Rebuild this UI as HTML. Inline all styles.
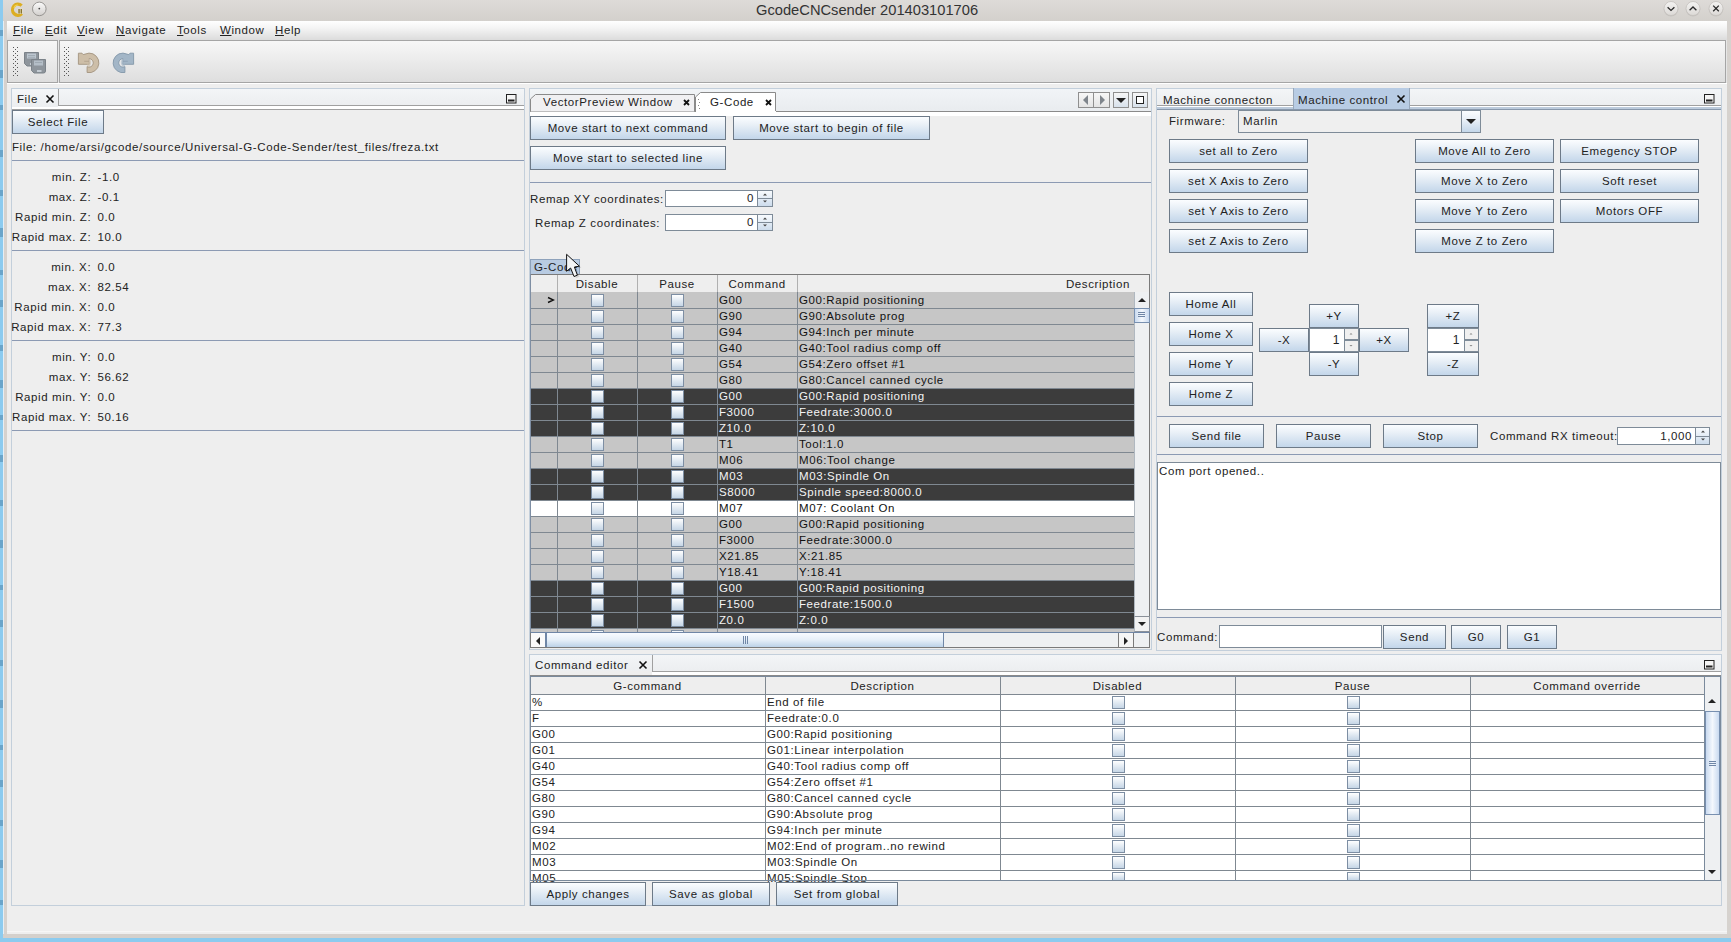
<!DOCTYPE html><html><head><meta charset="utf-8"><title>GcodeCNCsender</title><style>
*{margin:0;padding:0;box-sizing:border-box}
html,body{width:1731px;height:942px;overflow:hidden;background:#8ccbef;font-family:"Liberation Sans",sans-serif;font-size:11.5px;color:#222}
body div{position:absolute}
.t{white-space:pre;color:#222;letter-spacing:0.6px}
.b{border:1px solid #6d7a88;background:linear-gradient(#fbfdff 0%,#e9f0f7 35%,#c3d6ea 100%);text-align:center;white-space:pre;color:#222;letter-spacing:0.6px;box-sizing:content-box}
.cb{width:11px;height:11px;border:1px solid #7d8ea3;background:linear-gradient(#ffffff,#dce6f0 60%,#c6d6e6);box-sizing:content-box}
</style></head><body>
<div style="left:3px;top:0px;width:1728px;height:942px;background:#d6d2ce"></div>
<div style="left:3px;top:21px;width:1px;height:913px;background:#e6eef4"></div>
<div style="left:0px;top:30px;width:3px;height:6px;background:#4f86ab;opacity:0.55"></div>
<div style="left:0px;top:70px;width:3px;height:8px;background:#4f86ab;opacity:0.55"></div>
<div style="left:0px;top:105px;width:3px;height:5px;background:#4f86ab;opacity:0.55"></div>
<div style="left:0px;top:150px;width:3px;height:7px;background:#4f86ab;opacity:0.55"></div>
<div style="left:0px;top:190px;width:3px;height:6px;background:#4f86ab;opacity:0.55"></div>
<div style="left:0px;top:228px;width:3px;height:9px;background:#4f86ab;opacity:0.55"></div>
<div style="left:0px;top:270px;width:3px;height:5px;background:#4f86ab;opacity:0.55"></div>
<div style="left:0px;top:300px;width:3px;height:7px;background:#4f86ab;opacity:0.55"></div>
<div style="left:0px;top:345px;width:3px;height:6px;background:#4f86ab;opacity:0.55"></div>
<div style="left:0px;top:380px;width:3px;height:8px;background:#4f86ab;opacity:0.55"></div>
<div style="left:0px;top:415px;width:3px;height:5px;background:#4f86ab;opacity:0.55"></div>
<div style="left:0px;top:455px;width:3px;height:7px;background:#4f86ab;opacity:0.55"></div>
<div style="left:0px;top:500px;width:3px;height:6px;background:#4f86ab;opacity:0.55"></div>
<div style="left:0px;top:540px;width:3px;height:8px;background:#4f86ab;opacity:0.55"></div>
<div style="left:0px;top:585px;width:3px;height:5px;background:#4f86ab;opacity:0.55"></div>
<div style="left:0px;top:620px;width:3px;height:7px;background:#4f86ab;opacity:0.55"></div>
<div style="left:0px;top:660px;width:3px;height:6px;background:#4f86ab;opacity:0.55"></div>
<div style="left:0px;top:700px;width:3px;height:8px;background:#4f86ab;opacity:0.55"></div>
<div style="left:0px;top:745px;width:3px;height:5px;background:#4f86ab;opacity:0.55"></div>
<div style="left:0px;top:780px;width:3px;height:7px;background:#4f86ab;opacity:0.55"></div>
<div style="left:0px;top:820px;width:3px;height:6px;background:#4f86ab;opacity:0.55"></div>
<div style="left:0px;top:860px;width:3px;height:8px;background:#4f86ab;opacity:0.55"></div>
<div style="left:0px;top:900px;width:3px;height:5px;background:#4f86ab;opacity:0.55"></div>
<div style="left:3px;top:0px;width:1728px;height:21px;background:linear-gradient(#dedbd8,#d3d0cc)"></div>
<div class="t" style="left:756px;top:1px;height:18px;line-height:18px;font-size:14.7px;color:#333;letter-spacing:0">GcodeCNCsender 201403101706</div>
<svg style="position:absolute;left:9px;top:2px" width="16" height="16" viewBox="0 0 16 16"><path d="M12.6 3.6 A5.4 5.6 0 1 0 12.8 11.6" fill="none" stroke="#dcae22" stroke-width="3.2"/><path d="M5 6 A4 4 0 0 1 9 3" fill="none" stroke="#f2d24a" stroke-width="1.2"/><rect x="8.8" y="6.6" width="4.6" height="5.4" fill="#f1e7c6"/><rect x="9.4" y="7" width="1.3" height="4.6" fill="#7d6a22"/><rect x="11.6" y="7" width="1.3" height="4.6" fill="#7d6a22"/></svg>
<svg style="position:absolute;left:31px;top:1px" width="17" height="17" viewBox="0 0 17 17"><defs><linearGradient id="gb" x1="0" y1="0" x2="0" y2="1"><stop offset="0" stop-color="#fbfbfb"/><stop offset="1" stop-color="#d2cfcc"/></linearGradient></defs><circle cx="8.3" cy="7.9" r="6.8" fill="url(#gb)" stroke="#8f8c89" stroke-width="0.9"/><circle cx="8.3" cy="7.6" r="0.9" fill="#444"/></svg>
<svg style="position:absolute;left:1661.5px;top:0px" width="18" height="19" viewBox="0 0 18 19"><defs><linearGradient id="wgv" x1="0" y1="0" x2="0" y2="1"><stop offset="0" stop-color="#f4f3f2"/><stop offset="1" stop-color="#dcd9d6"/></linearGradient></defs><circle cx="9" cy="9.3" r="7.2" fill="#bdb9b5" opacity="0.6"/><circle cx="9" cy="8.5" r="7" fill="url(#wgv)" stroke="#c4c0bc" stroke-width="0.8"/><path d="M5.6 7.2 L9 10.4 L12.4 7.2" fill="none" stroke="#2a2a2a" stroke-width="1.3"/></svg>
<svg style="position:absolute;left:1684.4px;top:0px" width="18" height="19" viewBox="0 0 18 19"><defs><linearGradient id="wg^" x1="0" y1="0" x2="0" y2="1"><stop offset="0" stop-color="#f4f3f2"/><stop offset="1" stop-color="#dcd9d6"/></linearGradient></defs><circle cx="9" cy="9.3" r="7.2" fill="#bdb9b5" opacity="0.6"/><circle cx="9" cy="8.5" r="7" fill="url(#wg^)" stroke="#c4c0bc" stroke-width="0.8"/><path d="M5.6 10.2 L9 7 L12.4 10.2" fill="none" stroke="#2a2a2a" stroke-width="1.3"/></svg>
<svg style="position:absolute;left:1707.3px;top:0px" width="18" height="19" viewBox="0 0 18 19"><defs><linearGradient id="wgx" x1="0" y1="0" x2="0" y2="1"><stop offset="0" stop-color="#f4f3f2"/><stop offset="1" stop-color="#dcd9d6"/></linearGradient></defs><circle cx="9" cy="9.3" r="7.2" fill="#bdb9b5" opacity="0.6"/><circle cx="9" cy="8.5" r="7" fill="url(#wgx)" stroke="#c4c0bc" stroke-width="0.8"/><path d="M6.2 5.6 L11.8 11.2 M11.8 5.6 L6.2 11.2" fill="none" stroke="#2a2a2a" stroke-width="1.3"/></svg>
<div style="left:7px;top:21px;width:1720px;height:19px;background:linear-gradient(#ffffff,#f3f3f3 40%,#dcdcdc)"></div>
<div class="t" style="left:13px;top:22px;height:16px;line-height:16px;font-size:11.5px"><u>F</u>ile</div>
<div class="t" style="left:45px;top:22px;height:16px;line-height:16px;font-size:11.5px"><u>E</u>dit</div>
<div class="t" style="left:77px;top:22px;height:16px;line-height:16px;font-size:11.5px"><u>V</u>iew</div>
<div class="t" style="left:116px;top:22px;height:16px;line-height:16px;font-size:11.5px"><u>N</u>avigate</div>
<div class="t" style="left:177px;top:22px;height:16px;line-height:16px;font-size:11.5px"><u>T</u>ools</div>
<div class="t" style="left:220px;top:22px;height:16px;line-height:16px;font-size:11.5px"><u>W</u>indow</div>
<div class="t" style="left:275px;top:22px;height:16px;line-height:16px;font-size:11.5px"><u>H</u>elp</div>
<div style="left:7px;top:40px;width:1720px;height:44px;background:#e6e6e6"></div>
<div style="left:7px;top:40px;width:51px;height:43px;border:1px solid #a5a5a5;background:linear-gradient(#f7f7f7,#dedede)"></div>
<div style="left:59px;top:40px;width:1667px;height:43px;border:1px solid #a5a5a5;background:linear-gradient(#f7f7f7,#dedede)"></div>
<div style="left:13px;top:47px;width:1px;height:1px;background:#555"></div>
<div style="left:17px;top:47px;width:1px;height:1px;background:#555"></div>
<div style="left:15px;top:49px;width:1px;height:1px;background:#555"></div>
<div style="left:13px;top:51px;width:1px;height:1px;background:#555"></div>
<div style="left:17px;top:51px;width:1px;height:1px;background:#555"></div>
<div style="left:15px;top:53px;width:1px;height:1px;background:#555"></div>
<div style="left:13px;top:55px;width:1px;height:1px;background:#555"></div>
<div style="left:17px;top:55px;width:1px;height:1px;background:#555"></div>
<div style="left:15px;top:57px;width:1px;height:1px;background:#555"></div>
<div style="left:13px;top:59px;width:1px;height:1px;background:#555"></div>
<div style="left:17px;top:59px;width:1px;height:1px;background:#555"></div>
<div style="left:15px;top:61px;width:1px;height:1px;background:#555"></div>
<div style="left:13px;top:63px;width:1px;height:1px;background:#555"></div>
<div style="left:17px;top:63px;width:1px;height:1px;background:#555"></div>
<div style="left:15px;top:65px;width:1px;height:1px;background:#555"></div>
<div style="left:13px;top:67px;width:1px;height:1px;background:#555"></div>
<div style="left:17px;top:67px;width:1px;height:1px;background:#555"></div>
<div style="left:15px;top:69px;width:1px;height:1px;background:#555"></div>
<div style="left:13px;top:71px;width:1px;height:1px;background:#555"></div>
<div style="left:17px;top:71px;width:1px;height:1px;background:#555"></div>
<div style="left:15px;top:73px;width:1px;height:1px;background:#555"></div>
<div style="left:13px;top:75px;width:1px;height:1px;background:#555"></div>
<div style="left:17px;top:75px;width:1px;height:1px;background:#555"></div>
<div style="left:64px;top:47px;width:1px;height:1px;background:#555"></div>
<div style="left:68px;top:47px;width:1px;height:1px;background:#555"></div>
<div style="left:66px;top:49px;width:1px;height:1px;background:#555"></div>
<div style="left:64px;top:51px;width:1px;height:1px;background:#555"></div>
<div style="left:68px;top:51px;width:1px;height:1px;background:#555"></div>
<div style="left:66px;top:53px;width:1px;height:1px;background:#555"></div>
<div style="left:64px;top:55px;width:1px;height:1px;background:#555"></div>
<div style="left:68px;top:55px;width:1px;height:1px;background:#555"></div>
<div style="left:66px;top:57px;width:1px;height:1px;background:#555"></div>
<div style="left:64px;top:59px;width:1px;height:1px;background:#555"></div>
<div style="left:68px;top:59px;width:1px;height:1px;background:#555"></div>
<div style="left:66px;top:61px;width:1px;height:1px;background:#555"></div>
<div style="left:64px;top:63px;width:1px;height:1px;background:#555"></div>
<div style="left:68px;top:63px;width:1px;height:1px;background:#555"></div>
<div style="left:66px;top:65px;width:1px;height:1px;background:#555"></div>
<div style="left:64px;top:67px;width:1px;height:1px;background:#555"></div>
<div style="left:68px;top:67px;width:1px;height:1px;background:#555"></div>
<div style="left:66px;top:69px;width:1px;height:1px;background:#555"></div>
<div style="left:64px;top:71px;width:1px;height:1px;background:#555"></div>
<div style="left:68px;top:71px;width:1px;height:1px;background:#555"></div>
<div style="left:66px;top:73px;width:1px;height:1px;background:#555"></div>
<div style="left:64px;top:75px;width:1px;height:1px;background:#555"></div>
<div style="left:68px;top:75px;width:1px;height:1px;background:#555"></div>
<svg style="position:absolute;left:23px;top:51px" width="24" height="23" viewBox="0 0 24 23"><path d="M1.5 1.5 H15.5 V13 Q15.5 15 13.5 15 H4 L1.5 12.5 Z" fill="#8e959c" stroke="#7b8289"/><rect x="4" y="2.5" width="9" height="5" fill="#bcc6cf"/><rect x="5" y="4" width="7" height="0.8" fill="#9aa4ad"/><rect x="5" y="5.8" width="7" height="0.8" fill="#9aa4ad"/><rect x="7" y="12" width="4.5" height="2" fill="#c3cbd2"/><path d="M8.5 8.5 H22.5 V20 Q22.5 22 20.5 22 H11 L8.5 19.5 Z" fill="#8e959c" stroke="#7b8289"/><rect x="11" y="9.5" width="9" height="5" fill="#b4bec7"/><rect x="12" y="11" width="7" height="0.8" fill="#9aa4ad"/><rect x="14" y="19" width="4.5" height="2" fill="#c3cbd2"/></svg>
<svg style="position:absolute;left:76px;top:50px" width="25" height="25" viewBox="0 0 25 25"><g><path d="M2.4 3.2 L6 3.2 L7.2 4.6 L13 3.1 A9.8 9.8 0 1 1 11.1 22.5 L11.1 16.6 A4.2 4.2 0 1 0 13 8.7 L13.2 14.3 L2.4 14.3 Z" fill="#cdbea8" stroke="#a39480" stroke-width="0.9" stroke-linejoin="round"/><path d="M13 8.7 A4.2 4.2 0 0 1 11.1 16.6 L11.1 13.5 L8 13.5 L8 9 Z" fill="#cdbea8" opacity="0.6"/><path d="M8.2 11.3 H13" stroke="#a39480" stroke-width="0.8" opacity="0.7"/></g></svg>
<svg style="position:absolute;left:111px;top:50px" width="25" height="25" viewBox="0 0 25 25"><g transform="translate(25,0) scale(-1,1)"><path d="M2.4 3.2 L6 3.2 L7.2 4.6 L13 3.1 A9.8 9.8 0 1 1 11.1 22.5 L11.1 16.6 A4.2 4.2 0 1 0 13 8.7 L13.2 14.3 L2.4 14.3 Z" fill="#a3b6c7" stroke="#8397a9" stroke-width="0.9" stroke-linejoin="round"/><path d="M13 8.7 A4.2 4.2 0 0 1 11.1 16.6 L11.1 13.5 L8 13.5 L8 9 Z" fill="#a3b6c7" opacity="0.6"/><path d="M8.2 11.3 H13" stroke="#8397a9" stroke-width="0.8" opacity="0.7"/></g></svg>
<div style="left:7px;top:84px;width:1720px;height:850px;background:#eeeeee"></div>
<div style="left:7px;top:83px;width:1720px;height:1px;background:#ffffff"></div>
<div style="left:11px;top:88px;width:514px;height:818px;border:1px solid #c3cfdb;background:#eeeeee"></div>
<div style="left:12px;top:89px;width:512px;height:16px;background:linear-gradient(#f3f5f7,#eceef0)"></div>
<div style="left:58px;top:105px;width:466px;height:1px;background:#a0a0a0"></div>
<div style="left:58px;top:106px;width:466px;height:1px;background:#ffffff"></div>
<div style="left:12px;top:106px;width:512px;height:3px;background:#ffffff"></div>
<div style="left:12px;top:109px;width:512px;height:1px;background:#a0a0a0"></div>
<div style="left:58px;top:89px;width:1px;height:17px;background:#a0a0a0"></div>
<div style="left:12px;top:89px;width:46px;height:18px;background:linear-gradient(#f4f6f8,#eceef0)"></div>
<div class="t" style="left:17px;top:91px;height:16px;line-height:16px;">File</div>
<svg style="position:absolute;left:45px;top:94px" width="10" height="10" viewBox="0 0 10 10"><path d="M1.5 1.5 L8.5 8.5 M8.5 1.5 L1.5 8.5" stroke="#111" stroke-width="1.6"/></svg>
<svg style="position:absolute;left:506px;top:94px" width="11" height="10" viewBox="0 0 11 10"><rect x="0.5" y="0.5" width="9.5" height="8.5" fill="#f4f4f4" stroke="#222"/><rect x="2" y="5.5" width="6.5" height="2" fill="#222"/></svg>
<div class="b" style="left:12px;top:110px;width:90px;height:22px;line-height:22px;">Select File</div>
<div class="t" style="left:12px;top:139px;height:16px;line-height:16px;">File:</div>
<div class="t" style="left:40.6px;top:139px;height:16px;line-height:16px;letter-spacing:0.64px">/home/arsi/gcode/source/Universal-G-Code-Sender/test_files/freza.txt</div>
<div style="left:12px;top:160px;width:512px;height:1px;background:#8c9ab3"></div>
<div class="t" style="left:0px;top:169px;width:91.2px;height:16px;line-height:16px;text-align:right;">min. Z:</div>
<div class="t" style="left:97.5px;top:169px;height:16px;line-height:16px;">-1.0</div>
<div class="t" style="left:0px;top:189px;width:91.2px;height:16px;line-height:16px;text-align:right;">max. Z:</div>
<div class="t" style="left:97.5px;top:189px;height:16px;line-height:16px;">-0.1</div>
<div class="t" style="left:0px;top:209px;width:91.2px;height:16px;line-height:16px;text-align:right;">Rapid min. Z:</div>
<div class="t" style="left:97.5px;top:209px;height:16px;line-height:16px;">0.0</div>
<div class="t" style="left:0px;top:229px;width:91.2px;height:16px;line-height:16px;text-align:right;">Rapid max. Z:</div>
<div class="t" style="left:97.5px;top:229px;height:16px;line-height:16px;">10.0</div>
<div style="left:12px;top:250px;width:512px;height:1px;background:#8c9ab3"></div>
<div class="t" style="left:0px;top:259px;width:91.2px;height:16px;line-height:16px;text-align:right;">min. X:</div>
<div class="t" style="left:97.5px;top:259px;height:16px;line-height:16px;">0.0</div>
<div class="t" style="left:0px;top:279px;width:91.2px;height:16px;line-height:16px;text-align:right;">max. X:</div>
<div class="t" style="left:97.5px;top:279px;height:16px;line-height:16px;">82.54</div>
<div class="t" style="left:0px;top:299px;width:91.2px;height:16px;line-height:16px;text-align:right;">Rapid min. X:</div>
<div class="t" style="left:97.5px;top:299px;height:16px;line-height:16px;">0.0</div>
<div class="t" style="left:0px;top:319px;width:91.2px;height:16px;line-height:16px;text-align:right;">Rapid max. X:</div>
<div class="t" style="left:97.5px;top:319px;height:16px;line-height:16px;">77.3</div>
<div style="left:12px;top:340px;width:512px;height:1px;background:#8c9ab3"></div>
<div class="t" style="left:0px;top:349px;width:91.2px;height:16px;line-height:16px;text-align:right;">min. Y:</div>
<div class="t" style="left:97.5px;top:349px;height:16px;line-height:16px;">0.0</div>
<div class="t" style="left:0px;top:369px;width:91.2px;height:16px;line-height:16px;text-align:right;">max. Y:</div>
<div class="t" style="left:97.5px;top:369px;height:16px;line-height:16px;">56.62</div>
<div class="t" style="left:0px;top:389px;width:91.2px;height:16px;line-height:16px;text-align:right;">Rapid min. Y:</div>
<div class="t" style="left:97.5px;top:389px;height:16px;line-height:16px;">0.0</div>
<div class="t" style="left:0px;top:409px;width:91.2px;height:16px;line-height:16px;text-align:right;">Rapid max. Y:</div>
<div class="t" style="left:97.5px;top:409px;height:16px;line-height:16px;">50.16</div>
<div style="left:12px;top:430px;width:512px;height:1px;background:#8c9ab3"></div>
<div style="left:529px;top:88px;width:623px;height:562px;border:1px solid #c3cfdb;background:#eeeeee"></div>
<div style="left:530px;top:89px;width:621px;height:22px;background:linear-gradient(#f1f4f7,#e9ecef)"></div>
<div style="left:530px;top:111px;width:621px;height:1px;background:#8a8a8a"></div>
<div style="left:530px;top:112px;width:621px;height:4px;background:#ffffff"></div>
<svg style="position:absolute;left:530px;top:93px" width="166" height="19" viewBox="0 0 166 19"><path d="M0.5 18.5 L0.5 6 L5.5 1.5 L164.5 1.5 L164.5 18.5" fill="#f0f0f2" stroke="#8a8a8a"/></svg>
<div class="t" style="left:543px;top:94px;height:16px;line-height:16px;">VectorPreview Window</div>
<svg style="position:absolute;left:683px;top:99px" width="7" height="7" viewBox="0 0 7 7"><path d="M1 1 L6 6 M6 1 L1 6" stroke="#111" stroke-width="1.8"/></svg>
<svg style="position:absolute;left:695px;top:91px" width="82" height="22" viewBox="0 0 82 22"><path d="M0.5 21 L0.5 6 L5.5 1.5 L80.5 1.5 L80.5 21" fill="#ffffff" stroke="#8a8a8a"/></svg>
<div style="left:696px;top:111px;width:80px;height:2px;background:#fff"></div>
<div style="left:698px;top:99px;width:1px;height:1px;background:#888"></div>
<div style="left:699px;top:102px;width:1px;height:1px;background:#888"></div>
<div style="left:698px;top:105px;width:1px;height:1px;background:#888"></div>
<div style="left:699px;top:108px;width:1px;height:1px;background:#888"></div>
<div class="t" style="left:710px;top:93.5px;height:16px;line-height:16px;">G-Code</div>
<svg style="position:absolute;left:765px;top:99px" width="7" height="7" viewBox="0 0 7 7"><path d="M1 1 L6 6 M6 1 L1 6" stroke="#111" stroke-width="1.8"/></svg>
<div style="left:1078px;top:92px;width:32px;height:16px;border:1px solid #8f8f8f;background:linear-gradient(#f7f7f7,#e4e4e4)"></div>
<div style="left:1093px;top:93px;width:1px;height:14px;background:#8f8f8f"></div>
<svg style="position:absolute;left:1082px;top:94px" width="8" height="12" viewBox="0 0 8 12"><path d="M6 1 L1 6 L6 11 Z" fill="#7f858c"/></svg>
<svg style="position:absolute;left:1099px;top:94px" width="8" height="12" viewBox="0 0 8 12"><path d="M1 1 L6 6 L1 11 Z" fill="#7f858c"/></svg>
<div style="left:1113px;top:92px;width:16px;height:16px;border:1px solid #8f8f8f;background:linear-gradient(#f7f7f7,#d8e2ec)"></div>
<svg style="position:absolute;left:1115px;top:97px" width="12" height="7" viewBox="0 0 12 7"><path d="M1 1 L11 1 L6 6 Z" fill="#222"/></svg>
<div style="left:1132px;top:92px;width:16px;height:16px;border:1px solid #8f8f8f;background:linear-gradient(#f7f7f7,#d8e2ec)"></div>
<div style="left:1136px;top:96px;width:8px;height:8px;border:1.5px solid #222;background:#fff"></div>
<div class="b" style="left:530px;top:116px;width:194px;height:22px;line-height:22px;">Move start to next command</div>
<div class="b" style="left:733px;top:116px;width:195px;height:22px;line-height:22px;">Move start to begin of file</div>
<div class="b" style="left:530px;top:146px;width:194px;height:22px;line-height:22px;">Move start to selected line</div>
<div style="left:530px;top:182px;width:621px;height:1px;background:#8c9ab3"></div>
<div class="t" style="left:530px;top:191px;height:16px;line-height:16px;">Remap XY coordinates:</div>
<div style="left:665px;top:190px;width:92px;height:17px;border:1px solid #7e8b98;border-right:none;background:#fff"></div>
<div class="t" style="left:665px;top:190px;width:89px;height:17px;line-height:17px;text-align:right;">0</div>
<div style="left:757px;top:190px;width:16px;height:17px;border:1px solid #7e8b98;background:linear-gradient(#f8fbfe,#cddcec)"></div>
<div style="left:757px;top:198px;width:16px;height:1px;background:#7e8b98"></div>
<svg style="position:absolute;left:761px;top:191px" width="8" height="15" viewBox="0 0 8 15"><path d="M2 4.5 L4 2.5 L6 4.5 Z" fill="#444"/><path d="M2 9.5 L4 11.5 L6 9.5 Z" fill="#444"/></svg>
<div class="t" style="left:535px;top:215px;height:16px;line-height:16px;">Remap Z coordinates:</div>
<div style="left:665px;top:214px;width:92px;height:17px;border:1px solid #7e8b98;border-right:none;background:#fff"></div>
<div class="t" style="left:665px;top:214px;width:89px;height:17px;line-height:17px;text-align:right;">0</div>
<div style="left:757px;top:214px;width:16px;height:17px;border:1px solid #7e8b98;background:linear-gradient(#f8fbfe,#cddcec)"></div>
<div style="left:757px;top:222px;width:16px;height:1px;background:#7e8b98"></div>
<svg style="position:absolute;left:761px;top:215px" width="8" height="15" viewBox="0 0 8 15"><path d="M2 4.5 L4 2.5 L6 4.5 Z" fill="#444"/><path d="M2 9.5 L4 11.5 L6 9.5 Z" fill="#444"/></svg>
<div style="left:530px;top:259px;width:50px;height:16px;border:1px solid #8ea2bb;border-bottom:none;background:#b8cbe2"></div>
<div class="t" style="left:534px;top:259px;height:16px;line-height:16px;">G-Code</div>
<div style="left:530px;top:274px;width:620px;height:18px;border-top:1px solid #7a7a7a;border-right:1px solid #7a7a7a;background:#eeeeee"></div>
<div style="left:530px;top:274px;width:1px;height:374px;background:#7e8ea3"></div>
<div style="left:557px;top:275px;width:1px;height:17px;background:#b0b0b0"></div>
<div style="left:637px;top:275px;width:1px;height:17px;background:#b0b0b0"></div>
<div style="left:717px;top:275px;width:1px;height:17px;background:#b0b0b0"></div>
<div style="left:797px;top:275px;width:1px;height:17px;background:#b0b0b0"></div>
<div class="t" style="left:557px;top:276px;width:80px;height:17px;line-height:17px;text-align:center;">Disable</div>
<div class="t" style="left:637px;top:276px;width:80px;height:17px;line-height:17px;text-align:center;">Pause</div>
<div class="t" style="left:717px;top:276px;width:80px;height:17px;line-height:17px;text-align:center;">Command</div>
<div class="t" style="left:797px;top:276px;width:333px;height:17px;line-height:17px;text-align:right;">Description</div>
<div style="left:531px;top:292px;width:603px;height:1px;background:#8a8a8a"></div>
<div style="left:531px;top:292px;width:603px;height:16px;background:#c6c6c6"></div>
<div style="left:557px;top:292px;width:1px;height:16px;background:#7f8891"></div>
<div style="left:637px;top:292px;width:1px;height:16px;background:#7f8891"></div>
<div style="left:717px;top:292px;width:1px;height:16px;background:#7f8891"></div>
<div style="left:797px;top:292px;width:1px;height:16px;background:#7f8891"></div>
<div class="cb" style="left:591px;top:294px"></div>
<div class="cb" style="left:671px;top:294px"></div>
<div class="t" style="left:719px;top:291.5px;height:16px;line-height:16px;color:#111">G00</div>
<div class="t" style="left:799px;top:291.5px;height:16px;line-height:16px;color:#111">G00:Rapid positioning</div>
<svg style="position:absolute;left:547px;top:296px" width="8" height="8" viewBox="0 0 8 8"><path d="M1 1.5 L6.5 4 L1 6.5" fill="none" stroke="#111" stroke-width="1.4"/></svg>
<div style="left:531px;top:308px;width:603px;height:16px;background:#c6c6c6"></div>
<div style="left:531px;top:308px;width:603px;height:1px;background:#7f8891"></div>
<div style="left:557px;top:308px;width:1px;height:16px;background:#7f8891"></div>
<div style="left:637px;top:308px;width:1px;height:16px;background:#7f8891"></div>
<div style="left:717px;top:308px;width:1px;height:16px;background:#7f8891"></div>
<div style="left:797px;top:308px;width:1px;height:16px;background:#7f8891"></div>
<div class="cb" style="left:591px;top:310px"></div>
<div class="cb" style="left:671px;top:310px"></div>
<div class="t" style="left:719px;top:307.5px;height:16px;line-height:16px;color:#111">G90</div>
<div class="t" style="left:799px;top:307.5px;height:16px;line-height:16px;color:#111">G90:Absolute prog</div>
<div style="left:531px;top:324px;width:603px;height:16px;background:#c6c6c6"></div>
<div style="left:531px;top:324px;width:603px;height:1px;background:#7f8891"></div>
<div style="left:557px;top:324px;width:1px;height:16px;background:#7f8891"></div>
<div style="left:637px;top:324px;width:1px;height:16px;background:#7f8891"></div>
<div style="left:717px;top:324px;width:1px;height:16px;background:#7f8891"></div>
<div style="left:797px;top:324px;width:1px;height:16px;background:#7f8891"></div>
<div class="cb" style="left:591px;top:326px"></div>
<div class="cb" style="left:671px;top:326px"></div>
<div class="t" style="left:719px;top:323.5px;height:16px;line-height:16px;color:#111">G94</div>
<div class="t" style="left:799px;top:323.5px;height:16px;line-height:16px;color:#111">G94:Inch per minute</div>
<div style="left:531px;top:340px;width:603px;height:16px;background:#c6c6c6"></div>
<div style="left:531px;top:340px;width:603px;height:1px;background:#7f8891"></div>
<div style="left:557px;top:340px;width:1px;height:16px;background:#7f8891"></div>
<div style="left:637px;top:340px;width:1px;height:16px;background:#7f8891"></div>
<div style="left:717px;top:340px;width:1px;height:16px;background:#7f8891"></div>
<div style="left:797px;top:340px;width:1px;height:16px;background:#7f8891"></div>
<div class="cb" style="left:591px;top:342px"></div>
<div class="cb" style="left:671px;top:342px"></div>
<div class="t" style="left:719px;top:339.5px;height:16px;line-height:16px;color:#111">G40</div>
<div class="t" style="left:799px;top:339.5px;height:16px;line-height:16px;color:#111">G40:Tool radius comp off</div>
<div style="left:531px;top:356px;width:603px;height:16px;background:#c6c6c6"></div>
<div style="left:531px;top:356px;width:603px;height:1px;background:#7f8891"></div>
<div style="left:557px;top:356px;width:1px;height:16px;background:#7f8891"></div>
<div style="left:637px;top:356px;width:1px;height:16px;background:#7f8891"></div>
<div style="left:717px;top:356px;width:1px;height:16px;background:#7f8891"></div>
<div style="left:797px;top:356px;width:1px;height:16px;background:#7f8891"></div>
<div class="cb" style="left:591px;top:358px"></div>
<div class="cb" style="left:671px;top:358px"></div>
<div class="t" style="left:719px;top:355.5px;height:16px;line-height:16px;color:#111">G54</div>
<div class="t" style="left:799px;top:355.5px;height:16px;line-height:16px;color:#111">G54:Zero offset #1</div>
<div style="left:531px;top:372px;width:603px;height:16px;background:#c6c6c6"></div>
<div style="left:531px;top:372px;width:603px;height:1px;background:#7f8891"></div>
<div style="left:557px;top:372px;width:1px;height:16px;background:#7f8891"></div>
<div style="left:637px;top:372px;width:1px;height:16px;background:#7f8891"></div>
<div style="left:717px;top:372px;width:1px;height:16px;background:#7f8891"></div>
<div style="left:797px;top:372px;width:1px;height:16px;background:#7f8891"></div>
<div class="cb" style="left:591px;top:374px"></div>
<div class="cb" style="left:671px;top:374px"></div>
<div class="t" style="left:719px;top:371.5px;height:16px;line-height:16px;color:#111">G80</div>
<div class="t" style="left:799px;top:371.5px;height:16px;line-height:16px;color:#111">G80:Cancel canned cycle</div>
<div style="left:531px;top:388px;width:603px;height:16px;background:#3c3c3c"></div>
<div style="left:531px;top:388px;width:603px;height:1px;background:#7f8891"></div>
<div style="left:557px;top:388px;width:1px;height:16px;background:#7f8891"></div>
<div style="left:637px;top:388px;width:1px;height:16px;background:#7f8891"></div>
<div style="left:717px;top:388px;width:1px;height:16px;background:#7f8891"></div>
<div style="left:797px;top:388px;width:1px;height:16px;background:#7f8891"></div>
<div class="cb" style="left:591px;top:390px"></div>
<div class="cb" style="left:671px;top:390px"></div>
<div class="t" style="left:719px;top:387.5px;height:16px;line-height:16px;color:#f4f4f4">G00</div>
<div class="t" style="left:799px;top:387.5px;height:16px;line-height:16px;color:#f4f4f4">G00:Rapid positioning</div>
<div style="left:531px;top:404px;width:603px;height:16px;background:#3c3c3c"></div>
<div style="left:531px;top:404px;width:603px;height:1px;background:#7f8891"></div>
<div style="left:557px;top:404px;width:1px;height:16px;background:#7f8891"></div>
<div style="left:637px;top:404px;width:1px;height:16px;background:#7f8891"></div>
<div style="left:717px;top:404px;width:1px;height:16px;background:#7f8891"></div>
<div style="left:797px;top:404px;width:1px;height:16px;background:#7f8891"></div>
<div class="cb" style="left:591px;top:406px"></div>
<div class="cb" style="left:671px;top:406px"></div>
<div class="t" style="left:719px;top:403.5px;height:16px;line-height:16px;color:#f4f4f4">F3000</div>
<div class="t" style="left:799px;top:403.5px;height:16px;line-height:16px;color:#f4f4f4">Feedrate:3000.0</div>
<div style="left:531px;top:420px;width:603px;height:16px;background:#3c3c3c"></div>
<div style="left:531px;top:420px;width:603px;height:1px;background:#7f8891"></div>
<div style="left:557px;top:420px;width:1px;height:16px;background:#7f8891"></div>
<div style="left:637px;top:420px;width:1px;height:16px;background:#7f8891"></div>
<div style="left:717px;top:420px;width:1px;height:16px;background:#7f8891"></div>
<div style="left:797px;top:420px;width:1px;height:16px;background:#7f8891"></div>
<div class="cb" style="left:591px;top:422px"></div>
<div class="cb" style="left:671px;top:422px"></div>
<div class="t" style="left:719px;top:419.5px;height:16px;line-height:16px;color:#f4f4f4">Z10.0</div>
<div class="t" style="left:799px;top:419.5px;height:16px;line-height:16px;color:#f4f4f4">Z:10.0</div>
<div style="left:531px;top:436px;width:603px;height:16px;background:#c6c6c6"></div>
<div style="left:531px;top:436px;width:603px;height:1px;background:#7f8891"></div>
<div style="left:557px;top:436px;width:1px;height:16px;background:#7f8891"></div>
<div style="left:637px;top:436px;width:1px;height:16px;background:#7f8891"></div>
<div style="left:717px;top:436px;width:1px;height:16px;background:#7f8891"></div>
<div style="left:797px;top:436px;width:1px;height:16px;background:#7f8891"></div>
<div class="cb" style="left:591px;top:438px"></div>
<div class="cb" style="left:671px;top:438px"></div>
<div class="t" style="left:719px;top:435.5px;height:16px;line-height:16px;color:#111">T1</div>
<div class="t" style="left:799px;top:435.5px;height:16px;line-height:16px;color:#111">Tool:1.0</div>
<div style="left:531px;top:452px;width:603px;height:16px;background:#c6c6c6"></div>
<div style="left:531px;top:452px;width:603px;height:1px;background:#7f8891"></div>
<div style="left:557px;top:452px;width:1px;height:16px;background:#7f8891"></div>
<div style="left:637px;top:452px;width:1px;height:16px;background:#7f8891"></div>
<div style="left:717px;top:452px;width:1px;height:16px;background:#7f8891"></div>
<div style="left:797px;top:452px;width:1px;height:16px;background:#7f8891"></div>
<div class="cb" style="left:591px;top:454px"></div>
<div class="cb" style="left:671px;top:454px"></div>
<div class="t" style="left:719px;top:451.5px;height:16px;line-height:16px;color:#111">M06</div>
<div class="t" style="left:799px;top:451.5px;height:16px;line-height:16px;color:#111">M06:Tool change</div>
<div style="left:531px;top:468px;width:603px;height:16px;background:#3c3c3c"></div>
<div style="left:531px;top:468px;width:603px;height:1px;background:#7f8891"></div>
<div style="left:557px;top:468px;width:1px;height:16px;background:#7f8891"></div>
<div style="left:637px;top:468px;width:1px;height:16px;background:#7f8891"></div>
<div style="left:717px;top:468px;width:1px;height:16px;background:#7f8891"></div>
<div style="left:797px;top:468px;width:1px;height:16px;background:#7f8891"></div>
<div class="cb" style="left:591px;top:470px"></div>
<div class="cb" style="left:671px;top:470px"></div>
<div class="t" style="left:719px;top:467.5px;height:16px;line-height:16px;color:#f4f4f4">M03</div>
<div class="t" style="left:799px;top:467.5px;height:16px;line-height:16px;color:#f4f4f4">M03:Spindle On</div>
<div style="left:531px;top:484px;width:603px;height:16px;background:#3c3c3c"></div>
<div style="left:531px;top:484px;width:603px;height:1px;background:#7f8891"></div>
<div style="left:557px;top:484px;width:1px;height:16px;background:#7f8891"></div>
<div style="left:637px;top:484px;width:1px;height:16px;background:#7f8891"></div>
<div style="left:717px;top:484px;width:1px;height:16px;background:#7f8891"></div>
<div style="left:797px;top:484px;width:1px;height:16px;background:#7f8891"></div>
<div class="cb" style="left:591px;top:486px"></div>
<div class="cb" style="left:671px;top:486px"></div>
<div class="t" style="left:719px;top:483.5px;height:16px;line-height:16px;color:#f4f4f4">S8000</div>
<div class="t" style="left:799px;top:483.5px;height:16px;line-height:16px;color:#f4f4f4">Spindle speed:8000.0</div>
<div style="left:531px;top:500px;width:603px;height:16px;background:#ffffff"></div>
<div style="left:531px;top:500px;width:603px;height:1px;background:#7f8891"></div>
<div style="left:557px;top:500px;width:1px;height:16px;background:#7f8891"></div>
<div style="left:637px;top:500px;width:1px;height:16px;background:#7f8891"></div>
<div style="left:717px;top:500px;width:1px;height:16px;background:#7f8891"></div>
<div style="left:797px;top:500px;width:1px;height:16px;background:#7f8891"></div>
<div class="cb" style="left:591px;top:502px"></div>
<div class="cb" style="left:671px;top:502px"></div>
<div class="t" style="left:719px;top:499.5px;height:16px;line-height:16px;color:#111">M07</div>
<div class="t" style="left:799px;top:499.5px;height:16px;line-height:16px;color:#111">M07: Coolant On</div>
<div style="left:531px;top:516px;width:603px;height:16px;background:#c6c6c6"></div>
<div style="left:531px;top:516px;width:603px;height:1px;background:#7f8891"></div>
<div style="left:557px;top:516px;width:1px;height:16px;background:#7f8891"></div>
<div style="left:637px;top:516px;width:1px;height:16px;background:#7f8891"></div>
<div style="left:717px;top:516px;width:1px;height:16px;background:#7f8891"></div>
<div style="left:797px;top:516px;width:1px;height:16px;background:#7f8891"></div>
<div class="cb" style="left:591px;top:518px"></div>
<div class="cb" style="left:671px;top:518px"></div>
<div class="t" style="left:719px;top:515.5px;height:16px;line-height:16px;color:#111">G00</div>
<div class="t" style="left:799px;top:515.5px;height:16px;line-height:16px;color:#111">G00:Rapid positioning</div>
<div style="left:531px;top:532px;width:603px;height:16px;background:#c6c6c6"></div>
<div style="left:531px;top:532px;width:603px;height:1px;background:#7f8891"></div>
<div style="left:557px;top:532px;width:1px;height:16px;background:#7f8891"></div>
<div style="left:637px;top:532px;width:1px;height:16px;background:#7f8891"></div>
<div style="left:717px;top:532px;width:1px;height:16px;background:#7f8891"></div>
<div style="left:797px;top:532px;width:1px;height:16px;background:#7f8891"></div>
<div class="cb" style="left:591px;top:534px"></div>
<div class="cb" style="left:671px;top:534px"></div>
<div class="t" style="left:719px;top:531.5px;height:16px;line-height:16px;color:#111">F3000</div>
<div class="t" style="left:799px;top:531.5px;height:16px;line-height:16px;color:#111">Feedrate:3000.0</div>
<div style="left:531px;top:548px;width:603px;height:16px;background:#c6c6c6"></div>
<div style="left:531px;top:548px;width:603px;height:1px;background:#7f8891"></div>
<div style="left:557px;top:548px;width:1px;height:16px;background:#7f8891"></div>
<div style="left:637px;top:548px;width:1px;height:16px;background:#7f8891"></div>
<div style="left:717px;top:548px;width:1px;height:16px;background:#7f8891"></div>
<div style="left:797px;top:548px;width:1px;height:16px;background:#7f8891"></div>
<div class="cb" style="left:591px;top:550px"></div>
<div class="cb" style="left:671px;top:550px"></div>
<div class="t" style="left:719px;top:547.5px;height:16px;line-height:16px;color:#111">X21.85</div>
<div class="t" style="left:799px;top:547.5px;height:16px;line-height:16px;color:#111">X:21.85</div>
<div style="left:531px;top:564px;width:603px;height:16px;background:#c6c6c6"></div>
<div style="left:531px;top:564px;width:603px;height:1px;background:#7f8891"></div>
<div style="left:557px;top:564px;width:1px;height:16px;background:#7f8891"></div>
<div style="left:637px;top:564px;width:1px;height:16px;background:#7f8891"></div>
<div style="left:717px;top:564px;width:1px;height:16px;background:#7f8891"></div>
<div style="left:797px;top:564px;width:1px;height:16px;background:#7f8891"></div>
<div class="cb" style="left:591px;top:566px"></div>
<div class="cb" style="left:671px;top:566px"></div>
<div class="t" style="left:719px;top:563.5px;height:16px;line-height:16px;color:#111">Y18.41</div>
<div class="t" style="left:799px;top:563.5px;height:16px;line-height:16px;color:#111">Y:18.41</div>
<div style="left:531px;top:580px;width:603px;height:16px;background:#3c3c3c"></div>
<div style="left:531px;top:580px;width:603px;height:1px;background:#7f8891"></div>
<div style="left:557px;top:580px;width:1px;height:16px;background:#7f8891"></div>
<div style="left:637px;top:580px;width:1px;height:16px;background:#7f8891"></div>
<div style="left:717px;top:580px;width:1px;height:16px;background:#7f8891"></div>
<div style="left:797px;top:580px;width:1px;height:16px;background:#7f8891"></div>
<div class="cb" style="left:591px;top:582px"></div>
<div class="cb" style="left:671px;top:582px"></div>
<div class="t" style="left:719px;top:579.5px;height:16px;line-height:16px;color:#f4f4f4">G00</div>
<div class="t" style="left:799px;top:579.5px;height:16px;line-height:16px;color:#f4f4f4">G00:Rapid positioning</div>
<div style="left:531px;top:596px;width:603px;height:16px;background:#3c3c3c"></div>
<div style="left:531px;top:596px;width:603px;height:1px;background:#7f8891"></div>
<div style="left:557px;top:596px;width:1px;height:16px;background:#7f8891"></div>
<div style="left:637px;top:596px;width:1px;height:16px;background:#7f8891"></div>
<div style="left:717px;top:596px;width:1px;height:16px;background:#7f8891"></div>
<div style="left:797px;top:596px;width:1px;height:16px;background:#7f8891"></div>
<div class="cb" style="left:591px;top:598px"></div>
<div class="cb" style="left:671px;top:598px"></div>
<div class="t" style="left:719px;top:595.5px;height:16px;line-height:16px;color:#f4f4f4">F1500</div>
<div class="t" style="left:799px;top:595.5px;height:16px;line-height:16px;color:#f4f4f4">Feedrate:1500.0</div>
<div style="left:531px;top:612px;width:603px;height:16px;background:#3c3c3c"></div>
<div style="left:531px;top:612px;width:603px;height:1px;background:#7f8891"></div>
<div style="left:557px;top:612px;width:1px;height:16px;background:#7f8891"></div>
<div style="left:637px;top:612px;width:1px;height:16px;background:#7f8891"></div>
<div style="left:717px;top:612px;width:1px;height:16px;background:#7f8891"></div>
<div style="left:797px;top:612px;width:1px;height:16px;background:#7f8891"></div>
<div class="cb" style="left:591px;top:614px"></div>
<div class="cb" style="left:671px;top:614px"></div>
<div class="t" style="left:719px;top:611.5px;height:16px;line-height:16px;color:#f4f4f4">Z0.0</div>
<div class="t" style="left:799px;top:611.5px;height:16px;line-height:16px;color:#f4f4f4">Z:0.0</div>
<div style="left:531px;top:628px;width:603px;height:4px;background:#c6c6c6"></div>
<div style="left:531px;top:628px;width:603px;height:1px;background:#7f8891"></div>
<div style="left:557px;top:628px;width:1px;height:4px;background:#7f8891"></div>
<div style="left:637px;top:628px;width:1px;height:4px;background:#7f8891"></div>
<div style="left:717px;top:628px;width:1px;height:4px;background:#7f8891"></div>
<div style="left:797px;top:628px;width:1px;height:4px;background:#7f8891"></div>
<div class="cb" style="left:591px;top:630px;height:2px;border-bottom:none"></div>
<div class="cb" style="left:671px;top:630px;height:2px;border-bottom:none"></div>
<div style="left:1134px;top:292px;width:16px;height:340px;background:#eef0f2;border-left:1px solid #b0b8c0;border-right:1px solid #7a7a7a"></div>
<svg style="position:absolute;left:1137px;top:296px" width="10" height="8" viewBox="0 0 10 8"><path d="M1 6 L5 2 L9 6 Z" fill="#222"/></svg>
<div style="left:1134px;top:308px;width:16px;height:15px;border:1px solid #7890b0;background:linear-gradient(90deg,#c9daf0,#f4f8fd 50%,#c9daf0)"></div>
<div style="left:1138px;top:312px;width:7px;height:1px;background:#6f86a6"></div>
<div style="left:1138px;top:314px;width:7px;height:1px;background:#6f86a6"></div>
<div style="left:1138px;top:316px;width:7px;height:1px;background:#6f86a6"></div>
<div style="left:1134px;top:616px;width:16px;height:16px;border:1px solid #8a9099;border-left:1px solid #b0b8c0;background:#f2f2f2"></div>
<svg style="position:absolute;left:1137px;top:620px" width="10" height="8" viewBox="0 0 10 8"><path d="M1 2 L5 6 L9 2 Z" fill="#222"/></svg>
<div style="left:530px;top:632px;width:620px;height:16px;border:1px solid #7a7a7a;border-top:1px solid #6f86a6;background:#eef0f2"></div>
<div style="left:531px;top:633px;width:15px;height:14px;background:#fafafa;border-right:1px solid #6f86a6"></div>
<svg style="position:absolute;left:534px;top:636px" width="8" height="10" viewBox="0 0 8 10"><path d="M6 1 L2 5 L6 9 Z" fill="#222"/></svg>
<div style="left:546px;top:633px;width:398px;height:14px;border:1px solid #6f86a6;border-top:none;border-bottom:none;background:linear-gradient(#f8fbff,#e6eff8 50%,#bcd2e8)"></div>
<div style="left:743px;top:636px;width:1px;height:8px;background:#6f86a6"></div>
<div style="left:745px;top:636px;width:1px;height:8px;background:#6f86a6"></div>
<div style="left:747px;top:636px;width:1px;height:8px;background:#6f86a6"></div>
<div style="left:1118px;top:633px;width:16px;height:14px;background:#f5f5f5;border-left:1px solid #7a7a7a;border-right:1px solid #7a7a7a"></div>
<svg style="position:absolute;left:1122px;top:636px" width="8" height="10" viewBox="0 0 8 10"><path d="M2 1 L6 5 L2 9 Z" fill="#222"/></svg>
<div style="left:1156px;top:88px;width:566px;height:563px;border:1px solid #c3cfdb;background:#eeeeee"></div>
<div style="left:1157px;top:89px;width:564px;height:16px;background:linear-gradient(#f3f5f7,#eceef0)"></div>
<div style="left:1157px;top:105px;width:564px;height:1px;background:#a0a0a0"></div>
<div style="left:1157px;top:106px;width:564px;height:1px;background:#ffffff"></div>
<div style="left:1157px;top:107px;width:564px;height:2px;background:#bccbdc"></div>
<div style="left:1157px;top:109px;width:564px;height:1px;background:#8898ac"></div>
<div class="t" style="left:1163px;top:92px;height:16px;line-height:16px;">Machine connecton</div>
<div style="left:1293px;top:88px;width:117px;height:21px;background:#b8cce4;border-left:1px solid #98a8bb;border-right:1px solid #98a8bb"></div>
<div class="t" style="left:1298px;top:92px;height:16px;line-height:16px;">Machine control</div>
<svg style="position:absolute;left:1396px;top:94px" width="10" height="10" viewBox="0 0 10 10"><path d="M1.5 1.5 L8.5 8.5 M8.5 1.5 L1.5 8.5" stroke="#111" stroke-width="1.6"/></svg>
<svg style="position:absolute;left:1704px;top:94px" width="11" height="10" viewBox="0 0 11 10"><rect x="0.5" y="0.5" width="9.5" height="8.5" fill="#f4f4f4" stroke="#222"/><rect x="2" y="5.5" width="6.5" height="2" fill="#222"/></svg>
<div class="t" style="left:1169px;top:113px;height:16px;line-height:16px;">Firmware:</div>
<div style="left:1238px;top:110px;width:243px;height:23px;border:1px solid #7e8b98;background:#efefef"></div>
<div class="t" style="left:1243px;top:113px;height:16px;line-height:16px;">Marlin</div>
<div style="left:1461px;top:110px;width:20px;height:23px;border:1px solid #7e8b98;background:linear-gradient(#fbfdff,#e8eff7 45%,#c4d7ea)"></div>
<svg style="position:absolute;left:1465px;top:118px" width="12" height="8" viewBox="0 0 12 8"><path d="M1 1 L11 1 L6 6 Z" fill="#222"/></svg>
<div class="b" style="left:1169px;top:139px;width:137px;height:22px;line-height:22px;">set all to Zero</div>
<div class="b" style="left:1415px;top:139px;width:137px;height:22px;line-height:22px;">Move All to Zero</div>
<div class="b" style="left:1560px;top:139px;width:137px;height:22px;line-height:22px;">Emegency STOP</div>
<div class="b" style="left:1169px;top:169px;width:137px;height:22px;line-height:22px;">set X Axis to Zero</div>
<div class="b" style="left:1415px;top:169px;width:137px;height:22px;line-height:22px;">Move X to Zero</div>
<div class="b" style="left:1560px;top:169px;width:137px;height:22px;line-height:22px;">Soft reset</div>
<div class="b" style="left:1169px;top:199px;width:137px;height:22px;line-height:22px;">set Y Axis to Zero</div>
<div class="b" style="left:1415px;top:199px;width:137px;height:22px;line-height:22px;">Move Y to Zero</div>
<div class="b" style="left:1560px;top:199px;width:137px;height:22px;line-height:22px;">Motors OFF</div>
<div class="b" style="left:1169px;top:229px;width:137px;height:22px;line-height:22px;">set Z Axis to Zero</div>
<div class="b" style="left:1415px;top:229px;width:137px;height:22px;line-height:22px;">Move Z to Zero</div>
<div class="b" style="left:1169px;top:292px;width:82px;height:22px;line-height:22px;">Home All</div>
<div class="b" style="left:1169px;top:322px;width:82px;height:22px;line-height:22px;">Home X</div>
<div class="b" style="left:1169px;top:352px;width:82px;height:22px;line-height:22px;">Home Y</div>
<div class="b" style="left:1169px;top:382px;width:82px;height:22px;line-height:22px;">Home Z</div>
<div class="b" style="left:1309px;top:304px;width:48px;height:22px;line-height:22px;">+Y</div>
<div class="b" style="left:1259px;top:328px;width:48px;height:22px;line-height:22px;">-X</div>
<div class="b" style="left:1359px;top:328px;width:48px;height:22px;line-height:22px;">+X</div>
<div class="b" style="left:1309px;top:352px;width:48px;height:22px;line-height:22px;">-Y</div>
<div class="b" style="left:1427px;top:304px;width:50px;height:22px;line-height:22px;">+Z</div>
<div class="b" style="left:1427px;top:352px;width:50px;height:22px;line-height:22px;">-Z</div>
<div style="left:1309px;top:328px;width:50px;height:24px;border:1px solid #7e8b98;background:#fff"></div>
<div class="t" style="left:1309px;top:329px;width:31px;height:22px;line-height:22px;text-align:right;font-size:12px">1</div>
<div style="left:1344px;top:328px;width:15px;height:24px;border:1px solid #7e8b98;background:#f0f0f0"></div>
<div style="left:1344px;top:339px;width:15px;height:1px;background:#7e8b98"></div>
<div style="left:1344px;top:340px;width:15px;height:1px;background:#7e8b98"></div>
<svg style="position:absolute;left:1348px;top:332px" width="6" height="16" viewBox="0 0 6 16"><path d="M1.5 2.5 L3 1 L4.5 2.5 Z" fill="#888"/><path d="M1.5 13 L3 14.5 L4.5 13 Z" fill="#888"/></svg>
<div style="left:1427px;top:328px;width:52px;height:24px;border:1px solid #7e8b98;background:#fff"></div>
<div class="t" style="left:1427px;top:329px;width:33px;height:22px;line-height:22px;text-align:right;font-size:12px">1</div>
<div style="left:1464px;top:328px;width:15px;height:24px;border:1px solid #7e8b98;background:#f0f0f0"></div>
<div style="left:1464px;top:339px;width:15px;height:1px;background:#7e8b98"></div>
<div style="left:1464px;top:340px;width:15px;height:1px;background:#7e8b98"></div>
<svg style="position:absolute;left:1468px;top:332px" width="6" height="16" viewBox="0 0 6 16"><path d="M1.5 2.5 L3 1 L4.5 2.5 Z" fill="#888"/><path d="M1.5 13 L3 14.5 L4.5 13 Z" fill="#888"/></svg>
<div style="left:1157px;top:416px;width:564px;height:1px;background:#8c9ab3"></div>
<div class="b" style="left:1169px;top:424px;width:93px;height:22px;line-height:22px;">Send file</div>
<div class="b" style="left:1276px;top:424px;width:93px;height:22px;line-height:22px;">Pause</div>
<div class="b" style="left:1383px;top:424px;width:93px;height:22px;line-height:22px;">Stop</div>
<div class="t" style="left:1490px;top:428px;height:16px;line-height:16px;">Command RX timeout:</div>
<div style="left:1617px;top:427px;width:78px;height:18px;border:1px solid #7e8b98;border-right:none;background:#fff"></div>
<div class="t" style="left:1617px;top:427px;width:75px;height:18px;line-height:18px;text-align:right;">1,000</div>
<div style="left:1695px;top:427px;width:15px;height:18px;border:1px solid #7e8b98;background:linear-gradient(#f8fbfe,#cddcec)"></div>
<div style="left:1695px;top:436px;width:15px;height:1px;background:#7e8b98"></div>
<svg style="position:absolute;left:1699px;top:428px" width="8" height="16" viewBox="0 0 8 16"><path d="M2 4.5 L4 2.5 L6 4.5 Z" fill="#444"/><path d="M2 10.5 L4 12.5 L6 10.5 Z" fill="#444"/></svg>
<div style="left:1157px;top:454px;width:564px;height:1px;background:#8c9ab3"></div>
<div style="left:1157px;top:462px;width:564px;height:148px;border:1px solid #7e8b98;background:#fff"></div>
<div class="t" style="left:1159px;top:463px;height:16px;line-height:16px;">Com port opened..</div>
<div style="left:1157px;top:617px;width:564px;height:1px;background:#8c9ab3"></div>
<div class="t" style="left:1157px;top:629px;height:16px;line-height:16px;">Command:</div>
<div style="left:1219px;top:625px;width:163px;height:23px;border:1px solid #7e8b98;background:#fff"></div>
<div class="b" style="left:1383px;top:625px;width:61px;height:22px;line-height:22px;">Send</div>
<div class="b" style="left:1451px;top:625px;width:48px;height:22px;line-height:22px;">G0</div>
<div class="b" style="left:1507px;top:625px;width:48px;height:22px;line-height:22px;">G1</div>
<div style="left:529px;top:654px;width:1193px;height:252px;border:1px solid #c3cfdb;background:#eeeeee"></div>
<div style="left:530px;top:655px;width:1191px;height:16px;background:linear-gradient(#f3f5f7,#eceef0)"></div>
<div style="left:652px;top:671px;width:1069px;height:1px;background:#a0a0a0"></div>
<div style="left:652px;top:672px;width:1069px;height:3px;background:#ffffff"></div>
<div style="left:652px;top:655px;width:1px;height:17px;background:#a0a0a0"></div>
<div style="left:530px;top:675px;width:1191px;height:1px;background:#8a8a8a"></div>
<div class="t" style="left:535px;top:657px;height:16px;line-height:16px;">Command editor</div>
<svg style="position:absolute;left:638px;top:660px" width="10" height="10" viewBox="0 0 10 10"><path d="M1.5 1.5 L8.5 8.5 M8.5 1.5 L1.5 8.5" stroke="#111" stroke-width="1.6"/></svg>
<svg style="position:absolute;left:1704px;top:660px" width="11" height="10" viewBox="0 0 11 10"><rect x="0.5" y="0.5" width="9.5" height="8.5" fill="#f4f4f4" stroke="#222"/><rect x="2" y="5.5" width="6.5" height="2" fill="#222"/></svg>
<div style="left:530px;top:676px;width:1191px;height:205px;border:1px solid #7a8a9c;background:#ffffff"></div>
<div style="left:531px;top:677px;width:1173px;height:17px;background:#eeeeee"></div>
<div class="t" style="left:530px;top:678px;width:235px;height:17px;line-height:17px;text-align:center;">G-command</div>
<div class="t" style="left:765px;top:678px;width:235px;height:17px;line-height:17px;text-align:center;">Description</div>
<div style="left:765px;top:677px;width:1px;height:203px;background:#7f8891"></div>
<div class="t" style="left:1000px;top:678px;width:235px;height:17px;line-height:17px;text-align:center;">Disabled</div>
<div style="left:1000px;top:677px;width:1px;height:203px;background:#7f8891"></div>
<div class="t" style="left:1235px;top:678px;width:235px;height:17px;line-height:17px;text-align:center;">Pause</div>
<div style="left:1235px;top:677px;width:1px;height:203px;background:#7f8891"></div>
<div class="t" style="left:1470px;top:678px;width:234px;height:17px;line-height:17px;text-align:center;">Command override</div>
<div style="left:1470px;top:677px;width:1px;height:203px;background:#7f8891"></div>
<div style="left:531px;top:694px;width:1173px;height:1px;background:#7f8891"></div>
<div class="t" style="left:532px;top:694px;height:16px;line-height:16px;">%</div>
<div class="t" style="left:767px;top:694px;height:16px;line-height:16px;">End of file</div>
<div class="cb" style="left:1112px;top:696px"></div>
<div class="cb" style="left:1347px;top:696px"></div>
<div style="left:531px;top:710px;width:1173px;height:1px;background:#7f8891"></div>
<div class="t" style="left:532px;top:710px;height:16px;line-height:16px;">F</div>
<div class="t" style="left:767px;top:710px;height:16px;line-height:16px;">Feedrate:0.0</div>
<div class="cb" style="left:1112px;top:712px"></div>
<div class="cb" style="left:1347px;top:712px"></div>
<div style="left:531px;top:726px;width:1173px;height:1px;background:#7f8891"></div>
<div class="t" style="left:532px;top:726px;height:16px;line-height:16px;">G00</div>
<div class="t" style="left:767px;top:726px;height:16px;line-height:16px;">G00:Rapid positioning</div>
<div class="cb" style="left:1112px;top:728px"></div>
<div class="cb" style="left:1347px;top:728px"></div>
<div style="left:531px;top:742px;width:1173px;height:1px;background:#7f8891"></div>
<div class="t" style="left:532px;top:742px;height:16px;line-height:16px;">G01</div>
<div class="t" style="left:767px;top:742px;height:16px;line-height:16px;">G01:Linear interpolation</div>
<div class="cb" style="left:1112px;top:744px"></div>
<div class="cb" style="left:1347px;top:744px"></div>
<div style="left:531px;top:758px;width:1173px;height:1px;background:#7f8891"></div>
<div class="t" style="left:532px;top:758px;height:16px;line-height:16px;">G40</div>
<div class="t" style="left:767px;top:758px;height:16px;line-height:16px;">G40:Tool radius comp off</div>
<div class="cb" style="left:1112px;top:760px"></div>
<div class="cb" style="left:1347px;top:760px"></div>
<div style="left:531px;top:774px;width:1173px;height:1px;background:#7f8891"></div>
<div class="t" style="left:532px;top:774px;height:16px;line-height:16px;">G54</div>
<div class="t" style="left:767px;top:774px;height:16px;line-height:16px;">G54:Zero offset #1</div>
<div class="cb" style="left:1112px;top:776px"></div>
<div class="cb" style="left:1347px;top:776px"></div>
<div style="left:531px;top:790px;width:1173px;height:1px;background:#7f8891"></div>
<div class="t" style="left:532px;top:790px;height:16px;line-height:16px;">G80</div>
<div class="t" style="left:767px;top:790px;height:16px;line-height:16px;">G80:Cancel canned cycle</div>
<div class="cb" style="left:1112px;top:792px"></div>
<div class="cb" style="left:1347px;top:792px"></div>
<div style="left:531px;top:806px;width:1173px;height:1px;background:#7f8891"></div>
<div class="t" style="left:532px;top:806px;height:16px;line-height:16px;">G90</div>
<div class="t" style="left:767px;top:806px;height:16px;line-height:16px;">G90:Absolute prog</div>
<div class="cb" style="left:1112px;top:808px"></div>
<div class="cb" style="left:1347px;top:808px"></div>
<div style="left:531px;top:822px;width:1173px;height:1px;background:#7f8891"></div>
<div class="t" style="left:532px;top:822px;height:16px;line-height:16px;">G94</div>
<div class="t" style="left:767px;top:822px;height:16px;line-height:16px;">G94:Inch per minute</div>
<div class="cb" style="left:1112px;top:824px"></div>
<div class="cb" style="left:1347px;top:824px"></div>
<div style="left:531px;top:838px;width:1173px;height:1px;background:#7f8891"></div>
<div class="t" style="left:532px;top:838px;height:16px;line-height:16px;">M02</div>
<div class="t" style="left:767px;top:838px;height:16px;line-height:16px;">M02:End of program..no rewind</div>
<div class="cb" style="left:1112px;top:840px"></div>
<div class="cb" style="left:1347px;top:840px"></div>
<div style="left:531px;top:854px;width:1173px;height:1px;background:#7f8891"></div>
<div class="t" style="left:532px;top:854px;height:16px;line-height:16px;">M03</div>
<div class="t" style="left:767px;top:854px;height:16px;line-height:16px;">M03:Spindle On</div>
<div class="cb" style="left:1112px;top:856px"></div>
<div class="cb" style="left:1347px;top:856px"></div>
<div style="left:531px;top:870px;width:1173px;height:1px;background:#7f8891"></div>
<div class="t" style="left:532px;top:870px;height:16px;line-height:16px;">M05</div>
<div class="t" style="left:767px;top:870px;height:16px;line-height:16px;">M05:Spindle Stop</div>
<div class="cb" style="left:1112px;top:872px;height:7px;border-bottom:none"></div>
<div class="cb" style="left:1347px;top:872px;height:7px;border-bottom:none"></div>
<div style="left:531px;top:880px;width:1190px;height:1px;background:#7a8a9c"></div>
<div style="left:1704px;top:677px;width:16px;height:203px;background:#eef0f2;border-left:1px solid #7a8a9c"></div>
<svg style="position:absolute;left:1707px;top:697px" width="10" height="8" viewBox="0 0 10 8"><path d="M1 6 L5 2 L9 6 Z" fill="#222"/></svg>
<div style="left:1705px;top:711px;width:15px;height:104px;border:1px solid #7890b0;background:linear-gradient(90deg,#c9daf0,#f4f8fd 50%,#c9daf0)"></div>
<div style="left:1709px;top:761px;width:7px;height:1px;background:#6f86a6"></div>
<div style="left:1709px;top:763px;width:7px;height:1px;background:#6f86a6"></div>
<div style="left:1709px;top:765px;width:7px;height:1px;background:#6f86a6"></div>
<svg style="position:absolute;left:1707px;top:868px" width="10" height="8" viewBox="0 0 10 8"><path d="M1 2 L5 6 L9 2 Z" fill="#222"/></svg>
<div class="b" style="left:530px;top:882px;width:114px;height:22px;line-height:22px;">Apply changes</div>
<div class="b" style="left:652px;top:882px;width:116px;height:22px;line-height:22px;">Save as global</div>
<div class="b" style="left:776px;top:882px;width:120px;height:22px;line-height:22px;">Set from global</div>
<svg style="position:absolute;left:565px;top:253px" width="22" height="28" viewBox="0 0 22 28"><path d="M1.6 1.3 L1.6 18.3 L5.6 15 L9 23.5 L12.4 22.2 L9.4 14 L14.4 13.2 Z" fill="#000" opacity="0.12" transform="translate(2,1.5)"/><path d="M1.6 1.3 L1.6 18.3 L5.6 15 L9 23.5 L12.4 22.2 L9.4 14 L14.4 13.2 Z" fill="#f2f4f6" stroke="#111" stroke-width="1" stroke-linejoin="round"/></svg>
<div style="left:7px;top:931px;width:1720px;height:1px;background:#f6f6f6"></div>
<div style="left:3px;top:934px;width:1728px;height:4px;background:#d4d0cc"></div>
<div style="left:0px;top:938px;width:1731px;height:4px;background:#8ccbef"></div>
</body></html>
